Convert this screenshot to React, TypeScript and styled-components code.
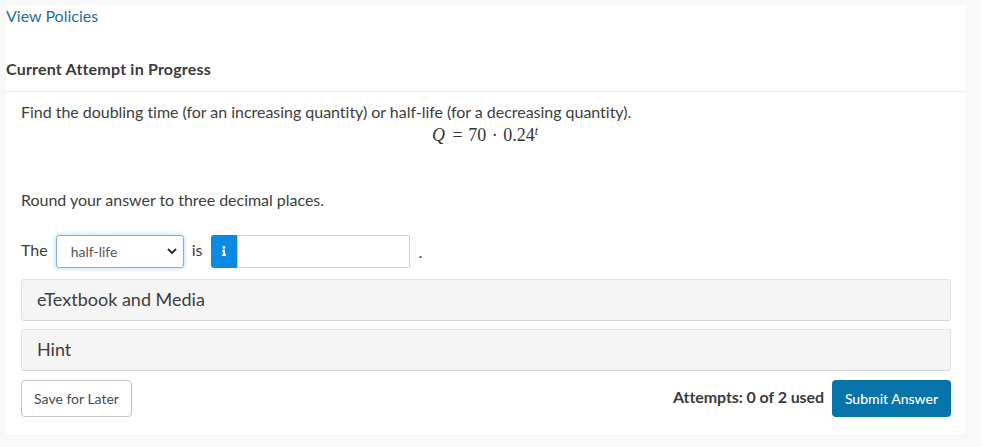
import React from 'react';
import styled, { createGlobalStyle } from 'styled-components';
import { FaInfo } from 'react-icons/fa';

const GlobalStyle = createGlobalStyle`
    html, body {
        margin: 0;
        padding: 0;
        background-color: #f8f8f8;
    }
    body {
        font-family: 'Lato', 'Liberation Sans', sans-serif;
        color: #3d3d3d;
    }
`;

const Card = styled.div`
    width: 960px;
    height: 429px;
    margin: 5px 0 0 6px;
    background-color: #fff;
    box-sizing: border-box;
`;

const PolicyLink = styled.a`
    display: block;
    height: 22px;
    font-size: 16px;
    line-height: 22px;
    color: #1f6f97;
    text-decoration: none;
`;

const AttemptHeader = styled.div`
    margin-top: 31px;
    height: 34px;
    box-sizing: border-box;
    border-bottom: 1px solid #ebebeb;
    font-size: 16px;
    font-weight: 700;
    line-height: 22px;
    letter-spacing: 0.2px;
    color: #3b3b3b;
`;

const Question = styled.div`
    padding: 8px 15px 0;
`;

const QuestionText = styled.div`
    font-size: 16px;
    line-height: 24px;
    height: 24px;
    letter-spacing: -0.03px;
`;

const Formula = styled.div`
    margin-top: 1px;
    font-family: 'Liberation Serif', serif;
    font-size: 18px;
    line-height: 20px;
    height: 20px;
    text-align: center;
    word-spacing: 1px;
    color: #333;

    i {
        padding-right: 2px;
    }

    sup {
        font-size: 12px;
        line-height: 0;
        vertical-align: 6px;
    }
`;

const RoundText = styled(QuestionText)`
    margin-top: 43px;
`;

const AnswerRow = styled.div`
    display: flex;
    align-items: center;
    height: 34px;
    margin-top: 22px;
    font-size: 16px;
`;

const Word = styled.span`
    margin-top: -3px;
`;

const SelectBox = styled.div`
    display: flex;
    align-items: center;
    justify-content: space-between;
    width: 128px;
    height: 33px;
    margin: 0 8px 0 8px;
    padding: 0 5px 0 14px;
    box-sizing: border-box;
    border: 1px solid #7fb0dc;
    border-radius: 3px;
    box-shadow: 0 0 5px rgba(102, 175, 233, 0.55);
    font-size: 14px;
    color: #555;
    background-color: #fff;
`;

const InfoTag = styled.div`
    display: flex;
    align-items: center;
    justify-content: center;
    width: 26px;
    height: 33px;
    margin-left: 9px;
    border-radius: 3px 0 0 3px;
    background-color: #0a8ae0;
    color: #fff;
    font-size: 10px;
`;

const AnswerInput = styled.div`
    width: 173px;
    height: 33px;
    box-sizing: border-box;
    border: 1px solid #cfcfcf;
    border-radius: 0 2px 2px 0;
`;

const Period = styled.span`
    margin-left: 8px;
`;

const Panel = styled.div<{ $top: number }>`
    height: 42px;
    margin-top: ${({ $top }) => $top}px;
    padding-left: 15px;
    box-sizing: border-box;
    border: 1px solid #e3e3e3;
    border-bottom-color: #d8d8d8;
    border-radius: 3px;
    background-color: #f5f5f5;
    font-size: 18px;
    line-height: 39px;
    color: #3d3d3d;
`;

const Footer = styled.div`
    display: flex;
    align-items: center;
    justify-content: space-between;
    margin-top: 9px;
`;

const SaveButton = styled.button`
    width: 111px;
    height: 37px;
    padding: 0;
    border: 1px solid #c4c4c4;
    border-radius: 4px;
    background-color: #fff;
    font-family: inherit;
    font-size: 14px;
    color: #4a4a4a;
`;

const SubmitGroup = styled.div`
    display: flex;
    align-items: center;
    gap: 8px;
`;

const Attempts = styled.span`
    margin-top: -4px;
    font-size: 16px;
    font-weight: 700;
    letter-spacing: -0.08px;
    color: #3b3b3b;
`;

const SubmitButton = styled.button`
    width: 119px;
    height: 37px;
    padding: 0;
    border: none;
    border-radius: 4px;
    background-color: #0674a8;
    font-family: inherit;
    font-size: 14px;
    font-weight: 500;
    color: #fff;
`;

const Chevron = () => (
    <svg width="12" height="12" viewBox="0 0 12 12" fill="none">
        <path d="M2 4l4 4 4-4" stroke="#333" strokeWidth="2" />
    </svg>
);

const App = () => {
    return (
        <>
            <GlobalStyle />
            <Card>
                <PolicyLink href="#">View Policies</PolicyLink>
                <AttemptHeader>Current Attempt in Progress</AttemptHeader>
                <Question>
                    <QuestionText>
                        Find the doubling time (for an increasing quantity) or half-life (for a decreasing quantity).
                    </QuestionText>
                    <Formula>
                        <i>Q</i> = 70 · 0.24<sup><i>t</i></sup>
                    </Formula>
                    <RoundText>Round your answer to three decimal places.</RoundText>
                    <AnswerRow>
                        <Word>The</Word>
                        <SelectBox>
                            half-life
                            <Chevron />
                        </SelectBox>
                        <Word>is</Word>
                        <InfoTag>
                            <FaInfo />
                        </InfoTag>
                        <AnswerInput />
                        <Period>.</Period>
                    </AnswerRow>
                    <Panel $top={11}>eTextbook and Media</Panel>
                    <Panel $top={8}>Hint</Panel>
                    <Footer>
                        <SaveButton>Save for Later</SaveButton>
                        <SubmitGroup>
                            <Attempts>Attempts: 0 of 2 used</Attempts>
                            <SubmitButton>Submit Answer</SubmitButton>
                        </SubmitGroup>
                    </Footer>
                </Question>
            </Card>
        </>
    );
};

export default App;
